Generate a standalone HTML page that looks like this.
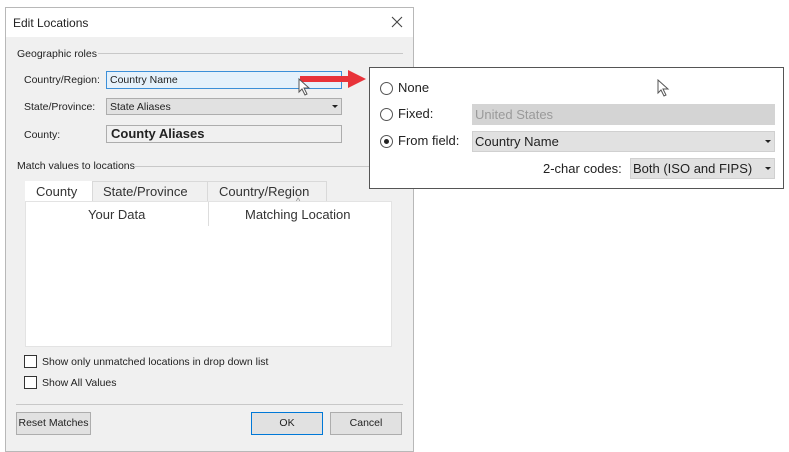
<!DOCTYPE html>
<html><head><style>
body{margin:0;width:789px;height:449px;background:#fff;position:relative;overflow:hidden;font-family:"Liberation Sans",sans-serif;color:#222}
div,span{position:absolute;box-sizing:border-box}
.s{font-size:10.5px;white-space:nowrap}
.m{font-size:13px;white-space:nowrap}
.cb{width:13px;height:13px;border:1px solid #333;background:#fff}
.btn{border:1px solid #adadad;background:#e1e1e1;font-size:10.5px;text-align:center;line-height:21px;white-space:nowrap}
.rad{width:13px;height:13px;border:1px solid #555;border-radius:50%;background:#fff}
.dd{width:0;height:0;border-left:3px solid transparent;border-right:3px solid transparent;border-top:3px solid #222}
</style></head><body>
<div style="left:5px;top:7px;width:409px;height:445px;border:1px solid #b8b8b8;background:#f0f0f0"></div>
<div style="left:6px;top:8px;width:407px;height:29px;background:#fff"></div>
<div class="s" style="left:13px;top:16px;font-size:12px">Edit Locations</div>
<svg style="position:absolute;left:391px;top:16px" width="12" height="12"><path d="M1 1L11 11M11 1L1 11" stroke="#444" stroke-width="1.1"/></svg>

<div class="s" style="left:17px;top:48px">Geographic roles</div>
<div style="left:98px;top:53px;width:305px;height:1px;background:#c8c8c8"></div>
<div class="s" style="left:24px;top:74px">Country/Region:</div>
<div style="left:106px;top:71px;width:236px;height:18px;background:#e5f1fb;border:1px solid #3c8fd8"></div>
<div class="s" style="left:110px;top:74px">Country Name</div>
<div class="s" style="left:24px;top:101px">State/Province:</div>
<div style="left:106px;top:98px;width:236px;height:17px;background:#e1e1e1;border:1px solid #adadad"></div>
<div class="s" style="left:110px;top:101px">State Aliases</div>
<div class="dd" style="left:332px;top:105px"></div>
<div class="s" style="left:24px;top:129px">County:</div>
<div style="left:106px;top:125px;width:236px;height:18px;background:#f0f0f0;border:1px solid #adadad"></div>
<div class="m" style="left:111px;top:126px;font-weight:bold">County Aliases</div>

<div class="s" style="left:17px;top:160px">Match values to locations</div>
<div style="left:135px;top:166px;width:268px;height:1px;background:#c8c8c8"></div>
<div style="left:92px;top:181px;width:235px;height:21px;border:1px solid #d9d9d9;background:#f0f0f0"></div>
<div style="left:207px;top:181px;width:1px;height:20px;background:#d9d9d9"></div>
<div style="left:25px;top:181px;width:67px;height:21px;background:#fff"></div>
<div class="m" style="left:36px;top:184px;color:#333">County</div>
<div class="m" style="left:103px;top:184px;color:#333">State/Province</div>
<div class="m" style="left:219px;top:184px;color:#333">Country/Region</div>
<div style="left:25px;top:201px;width:367px;height:146px;background:#fff;border:1px solid #e3e3e3"></div>
<div style="left:208px;top:202px;width:1px;height:24px;background:#ddd"></div>
<div class="m" style="left:88px;top:207px;color:#333">Your Data</div>
<div class="m" style="left:245px;top:207px;color:#333">Matching Location</div>
<div class="s" style="left:296px;top:196px;font-size:9px;color:#888">^</div>

<div class="cb" style="left:24px;top:355px"></div>
<div class="s" style="left:42px;top:356px">Show only unmatched locations in drop down list</div>
<div class="cb" style="left:24px;top:376px"></div>
<div class="s" style="left:42px;top:377px">Show All Values</div>
<div style="left:16px;top:404px;width:387px;height:1px;background:#c8c8c8"></div>
<div class="btn" style="left:16px;top:412px;width:75px;height:23px">Reset Matches</div>
<div class="btn" style="left:251px;top:412px;width:72px;height:23px;border:1px solid #0078d7">OK</div>
<div class="btn" style="left:330px;top:412px;width:72px;height:23px">Cancel</div>

<svg style="position:absolute;left:296px;top:70px" width="72" height="18"><rect x="4" y="6" width="52" height="6" fill="#e8333a"/><polygon points="52,0 70,9 52,18" fill="#e8333a"/></svg>
<svg style="position:absolute;left:298px;top:78px" width="14" height="18"><path d="M1 1 L1 14 L4 11 L7 17 L9 16 L6 10 L11 10 Z" fill="#fff" stroke="#555" stroke-width="1"/></svg>

<div style="left:369px;top:67px;width:415px;height:122px;background:#fff;border:1px solid #555"></div>
<svg style="position:absolute;left:657px;top:79px" width="14" height="18"><path d="M1 1 L1 14 L4 11 L7 17 L9 16 L6 10 L11 10 Z" fill="#fff" stroke="#555" stroke-width="1"/></svg>
<div class="rad" style="left:380px;top:82px"></div>
<div class="m" style="left:398px;top:80px">None</div>
<div class="rad" style="left:380px;top:108px"></div>
<div class="m" style="left:398px;top:106px">Fixed:</div>
<div style="left:472px;top:104px;width:303px;height:21px;background:#d4d4d4"></div>
<div class="m" style="left:475px;top:107px;color:#9a9a9a">United States</div>
<div class="rad" style="left:380px;top:135px"></div>
<div style="left:384px;top:139px;width:5px;height:5px;border-radius:50%;background:#222"></div>
<div class="m" style="left:398px;top:133px">From field:</div>
<div style="left:472px;top:131px;width:303px;height:21px;background:#e1e1e1;border:1px solid #d0d0d0"></div>
<div class="m" style="left:475px;top:134px">Country Name</div>
<div class="dd" style="left:765px;top:140px"></div>
<div class="m" style="left:543px;top:161px">2-char codes:</div>
<div style="left:630px;top:158px;width:145px;height:21px;background:#e1e1e1;border:1px solid #d0d0d0"></div>
<div class="m" style="left:633px;top:161px">Both (ISO and FIPS)</div>
<div class="dd" style="left:765px;top:167px"></div>
</body></html>
